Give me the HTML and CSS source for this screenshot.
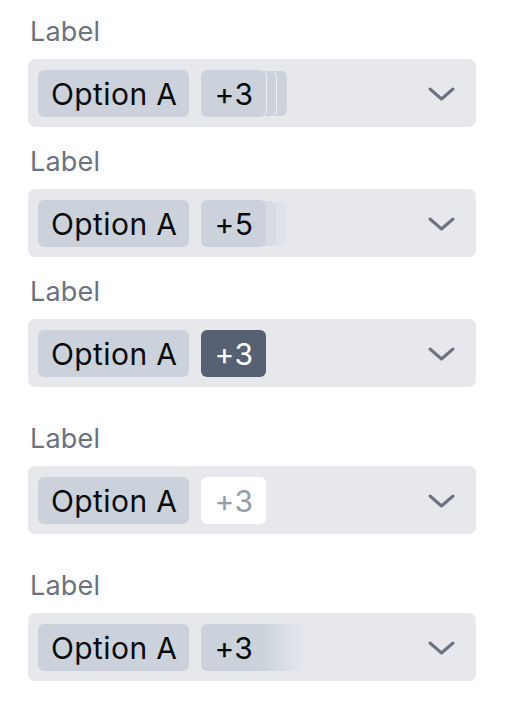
FILE: index.html
```html
<!DOCTYPE html>
<html>
<head>
<meta charset="utf-8">
<link rel="stylesheet" href="styles.css">
</head>
<body>
<div class="stack">
  <div class="field">
    <div class="label">Label</div>
    <div class="box">
      <span class="chip">Option A</span>
      <span class="more-wrap stacked">
        <span class="chip more">+3</span>
      </span>
      <svg class="chev" width="27" height="14" viewBox="0 0 27 14"><polyline points="2,2 13.5,12 25,2"/></svg>
    </div>
  </div>
  <div class="field">
    <div class="label">Label</div>
    <div class="box">
      <span class="chip">Option A</span>
      <span class="more-wrap faded">
        <span class="chip more">+5</span>
      </span>
      <svg class="chev" width="27" height="14" viewBox="0 0 27 14"><polyline points="2,2 13.5,12 25,2"/></svg>
    </div>
  </div>
  <div class="field">
    <div class="label">Label</div>
    <div class="box">
      <span class="chip">Option A</span>
      <span class="chip more dark">+3</span>
      <svg class="chev" width="27" height="14" viewBox="0 0 27 14"><polyline points="2,2 13.5,12 25,2"/></svg>
    </div>
  </div>
  <div class="field spaced">
    <div class="label">Label</div>
    <div class="box">
      <span class="chip">Option A</span>
      <span class="chip more light">+3</span>
      <svg class="chev" width="27" height="14" viewBox="0 0 27 14"><polyline points="2,2 13.5,12 25,2"/></svg>
    </div>
  </div>
  <div class="field spaced">
    <div class="label">Label</div>
    <div class="box">
      <span class="chip">Option A</span>
      <span class="chip more fade">+3</span>
      <svg class="chev" width="27" height="14" viewBox="0 0 27 14"><polyline points="2,2 13.5,12 25,2"/></svg>
    </div>
  </div>
</div>
</body>
</html>
```
FILE: styles.css
```css
html, body {
  margin: 0;
  padding: 0;
  background: #ffffff;
}
body {
  font-family: Inter, "Noto Sans", sans-serif;
}
.stack {
  padding: 14px 0 0 28px;
  width: 448px;
}
.field {
  display: flex;
  flex-direction: column;
}
.field + .field {
  margin-top: 17px;
}
.field.spaced {
  margin-top: 34px;
}
.label {
  font-size: 27px;
  line-height: 36px;
  letter-spacing: 0.2px;
  color: #6b7280;
  margin-left: 2px;
  margin-bottom: 9px;
}
.box {
  height: 68px;
  box-sizing: border-box;
  background: #e6e8ec;
  border-radius: 7px;
  display: flex;
  align-items: center;
  padding: 1px 21px 0 10px;
  gap: 12px;
}
.chip {
  height: 47px;
  box-sizing: border-box;
  display: flex;
  align-items: center;
  padding: 0 12px 0 13px;
  background: #cbd2db;
  border-radius: 6px;
  font-size: 30px;
  letter-spacing: 0.4px;
  color: #0a0a0a;
  white-space: nowrap;
}
.chip.more {
  width: 65px;
  justify-content: center;
  padding: 0;
}
.more-wrap {
  position: relative;
  display: flex;
}
.more-wrap .chip {
  position: relative;
  z-index: 2;
}
.more-wrap::before,
.more-wrap::after {
  content: "";
  position: absolute;
  top: 1px;
  bottom: 1px;
  width: 65px;
  border-radius: 6px;
  box-sizing: border-box;
}
.more-wrap::before {
  left: 10px;
  z-index: 1;
}
.more-wrap::after {
  left: 21px;
  z-index: 0;
}
.stacked .chip,
.stacked::before {
  box-shadow: 1px 0 0 #eceef1;
}
.stacked::before,
.stacked::after {
  background: #cbd2db;
}
.faded::before {
  background: #d7dce3;
}
.faded::after {
  background: #dfe3e8;
}
.chip.dark {
  background: #566173;
  color: #ffffff;
}
.chip.light {
  background: #ffffff;
  color: #969eaa;
}
.chip.fade {
  width: 106px;
  justify-content: flex-start;
  padding-left: 13px;
  background: linear-gradient(to right, #cbd2db 0%, #cbd2db 55%, rgba(203, 210, 219, 0) 100%);
}
.chev {
  margin-left: auto;
  fill: none;
  stroke: #6b7280;
  stroke-width: 3;
  stroke-linecap: round;
  stroke-linejoin: round;
}
```
